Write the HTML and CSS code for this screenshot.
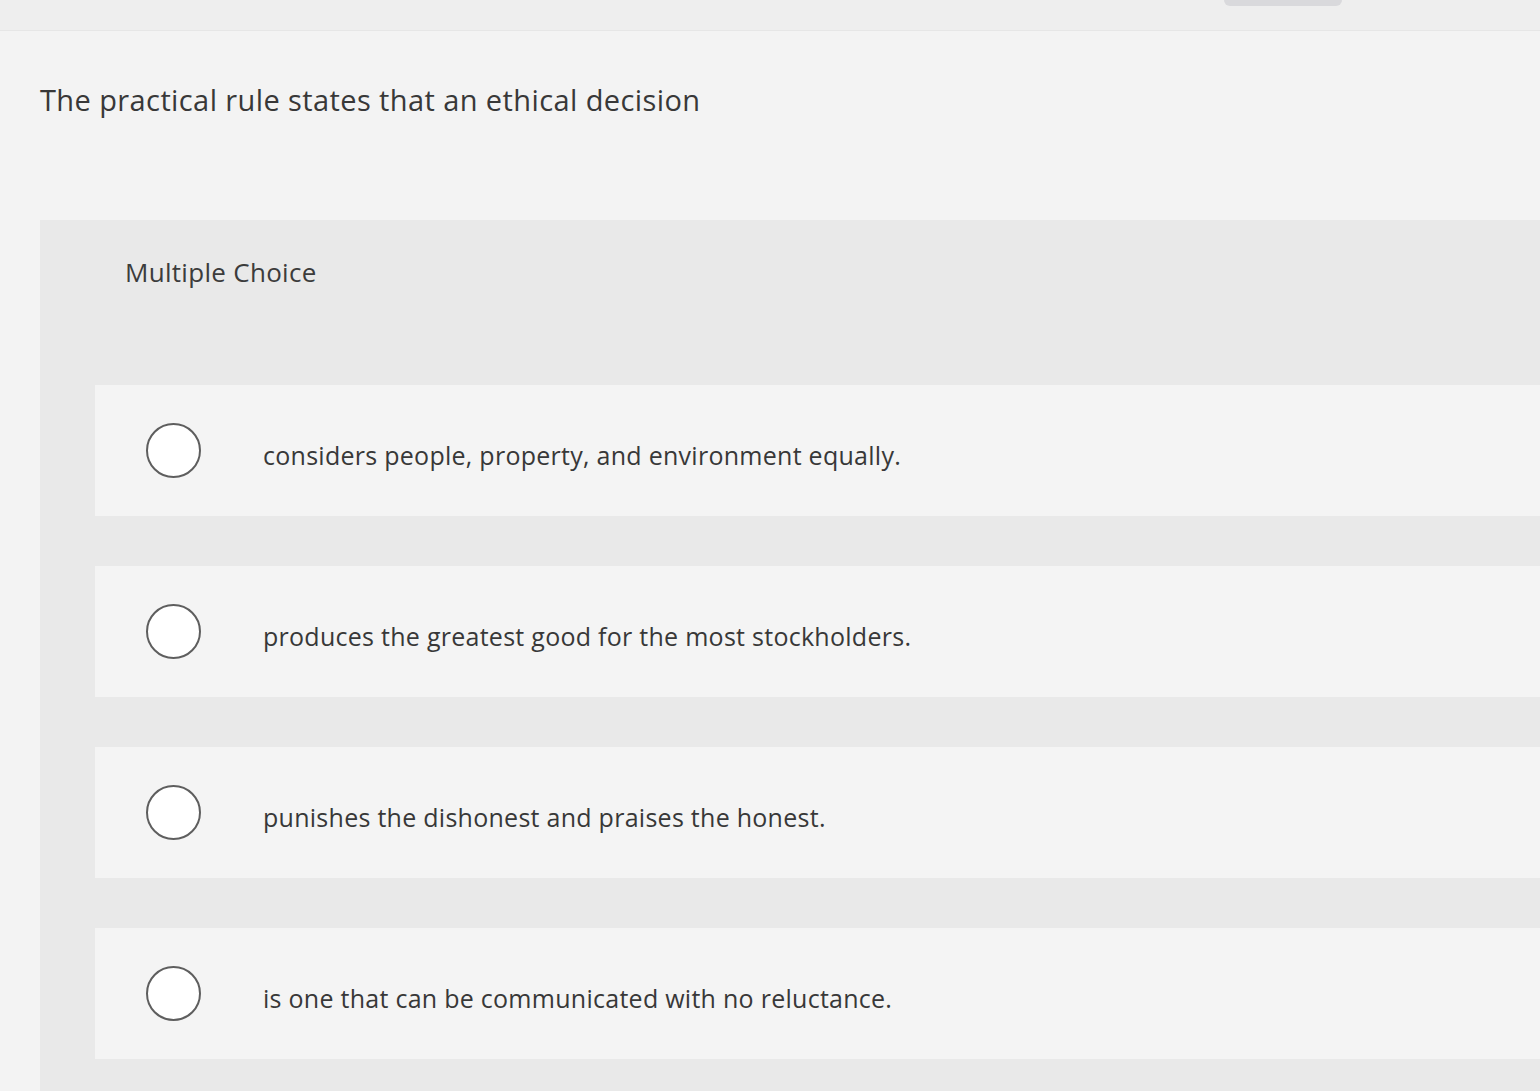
FILE: index.html
```html
<!DOCTYPE html>
<html>
<head>
<meta charset="utf-8">
<link rel="stylesheet" href="styles.css">
</head>
<body>
<div class="top-strip"><div class="tab"></div></div>
<h1 class="question">The practical rule states that an ethical decision</h1>
<section class="panel">
  <div class="panel-head">Multiple Choice</div>
  <div class="options">
    <label class="option"><span class="radio"></span><span class="opt-text">considers people, property, and environment equally.</span></label>
    <label class="option"><span class="radio"></span><span class="opt-text">produces the greatest good for the most stockholders.</span></label>
    <label class="option"><span class="radio"></span><span class="opt-text">punishes the dishonest and praises the honest.</span></label>
    <label class="option"><span class="radio"></span><span class="opt-text">is one that can be communicated with no reluctance.</span></label>
  </div>
</section>
</body>
</html>
```
FILE: styles.css
```css
html, body {
  margin: 0;
  padding: 0;
}
body {
  background: #f3f3f3;
  font-family: "Open Sans", Lato, "Liberation Sans", sans-serif;
  color: #3a3a3a;
  height: 1091px;
  overflow: hidden;
}
.top-strip {
  height: 30px;
  background: #eeeeee;
  border-bottom: 1px solid #e6e6e6;
  display: flex;
  justify-content: flex-end;
  padding-right: 198px;
}
.tab {
  width: 118px;
  height: 6px;
  background: #d9d9dc;
  border-radius: 0 0 8px 8px;
}
.question {
  margin: 0;
  padding: 51px 40px 0;
  font-size: 29px;
  font-weight: 400;
  line-height: 36px;
  letter-spacing: 0.4px;
  color: #383838;
}
.panel {
  margin: 102px 0 0 40px;
  background: #e9e9e9;
  padding: 32px 0 32px 0;
}
.panel-head {
  padding-left: 85px;
  font-size: 26px;
  line-height: 40px;
  letter-spacing: 0.3px;
  color: #3c3c3c;
}
.options {
  margin-top: 93px;
  margin-left: 55px;
  display: flex;
  flex-direction: column;
  gap: 50px;
}
.option {
  display: flex;
  align-items: center;
  height: 131px;
  background: #f4f4f4;
  padding-left: 51px;
}
.radio {
  width: 51px;
  height: 51px;
  border: 2px solid #5e5e5e;
  border-radius: 50%;
  background: #ffffff;
  flex: none;
}
.opt-text {
  margin-left: 62px;
  margin-top: 8px;
  font-size: 25px;
  letter-spacing: 0.27px;
  color: #383838;
}
```
